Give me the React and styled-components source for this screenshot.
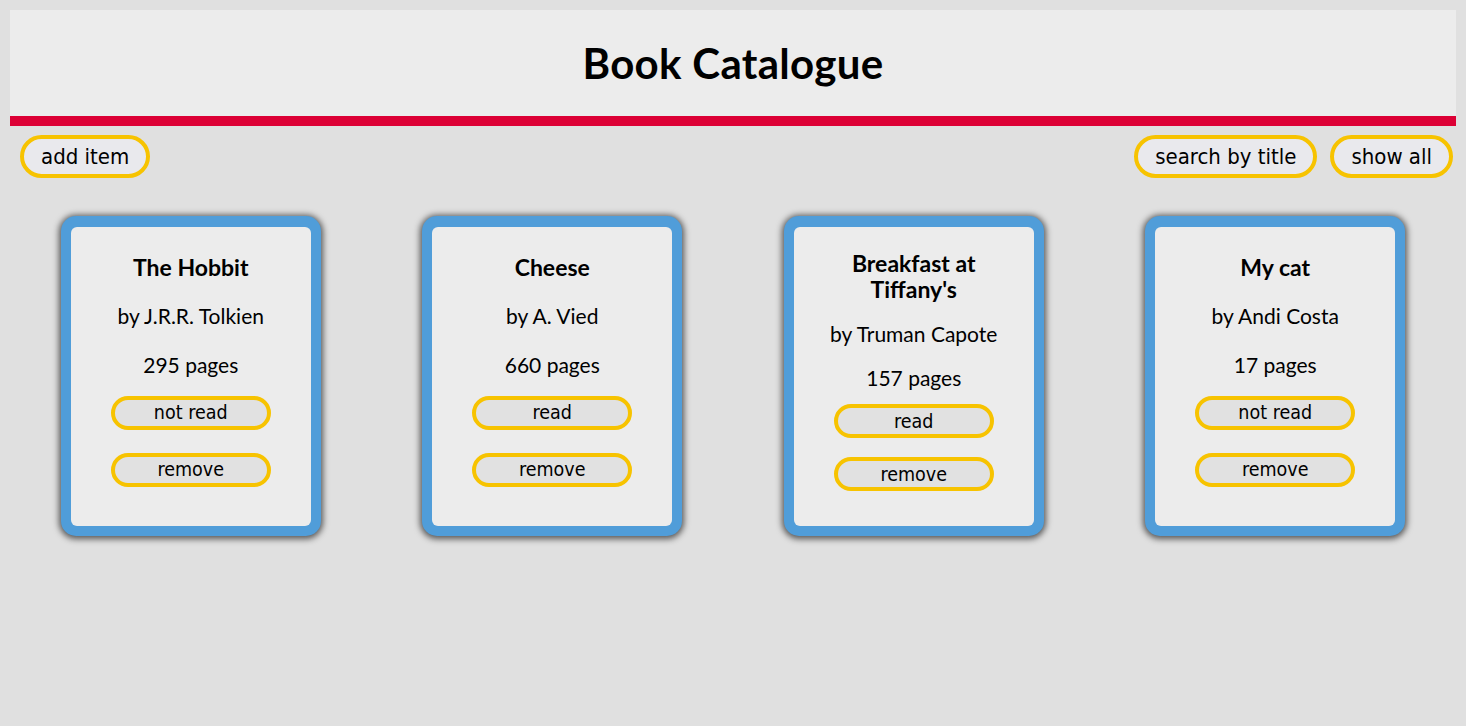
import React from "react";
import styled, { createGlobalStyle } from "styled-components";

const Global = createGlobalStyle`
  html, body { margin: 0; padding: 0; }
  body {
    background: #e0e0e0;
    font-family: Lato, "Open Sans", sans-serif;
    padding: 10px;
    min-height: 726px;
    box-sizing: border-box;
  }
`;

const Header = styled.header`
  background: #ececec;
  border-bottom: 10px solid #dc0035;
  height: 106px;
  display: flex;
  align-items: center;
  justify-content: center;
`;

const Title = styled.h1`
  margin: 0;
  font-size: 42px;
  font-weight: 700;
  color: #000;
  letter-spacing: 0.3px;
`;

const Toolbar = styled.div`
  display: flex;
  justify-content: space-between;
  align-items: center;
  padding: 9px 3px 0 10px;
`;

const Group = styled.div`
  display: flex;
  gap: 13px;
`;

const PillButton = styled.button`
  font-family: "DejaVu Sans Condensed", "DejaVu Sans", sans-serif;
  font-size: 22px;
  color: #000;
  background: #e9e9ed;
  border: 4px solid #f7c300;
  border-radius: 22px;
  height: 43px;
  padding: 0 17px;
  cursor: pointer;
`;

const Grid = styled.div`
  display: grid;
  grid-template-columns: repeat(4, 1fr);
  margin-top: 38px;
`;

const Card = styled.div`
  justify-self: center;
  width: 240px;
  height: 299px;
  background: #509dd9;
  border-radius: 15px;
  padding: 11px 10px 10px;
  box-shadow: 0 1px 6px 2px rgba(0, 0, 0, 0.62);
`;

const Inner = styled.div`
  background: #ececec;
  border-radius: 6px;
  height: 299px;
  box-sizing: border-box;
  padding: 4px 12px 16px;
  display: flex;
  flex-direction: column;
  align-items: center;
  justify-content: space-evenly;
  text-align: center;
`;

const BookTitle = styled.h2`
  margin: 0;
  font-size: 23px;
  line-height: 26px;
  font-weight: 700;
  color: #000;
  max-width: 180px;
`;

const Line = styled.p`
  margin: 0;
  font-size: 21px;
  line-height: 26px;
  color: #000;
`;

const CardButton = styled.button`
  font-family: "DejaVu Sans Condensed", "DejaVu Sans", sans-serif;
  font-size: 19.5px;
  color: #000;
  background: #e1e1e1;
  border: 4px solid #f7c300;
  border-radius: 17px;
  width: 160px;
  height: 34px;
  padding: 0;
  margin-top: ${(p) => (p.$first ? "-6px" : "0")};
  cursor: pointer;
`;

const books = [
  { title: "The Hobbit", author: "J.R.R. Tolkien", pages: 295, read: false },
  { title: "Cheese", author: "A. Vied", pages: 660, read: true },
  { title: "Breakfast at Tiffany's", author: "Truman Capote", pages: 157, read: true },
  { title: "My cat", author: "Andi Costa", pages: 17, read: false },
];

export default function App() {
  return (
    <>
      <Global />
      <Header>
        <Title>Book Catalogue</Title>
      </Header>
      <Toolbar>
        <PillButton>add item</PillButton>
        <Group>
          <PillButton>search by title</PillButton>
          <PillButton>show all</PillButton>
        </Group>
      </Toolbar>
      <Grid>
        {books.map((b) => (
          <Card key={b.title}>
            <Inner>
              <BookTitle>{b.title}</BookTitle>
              <Line>by {b.author}</Line>
              <Line>{b.pages} pages</Line>
              <CardButton $first>{b.read ? "read" : "not read"}</CardButton>
              <CardButton>remove</CardButton>
            </Inner>
          </Card>
        ))}
      </Grid>
    </>
  );
}
